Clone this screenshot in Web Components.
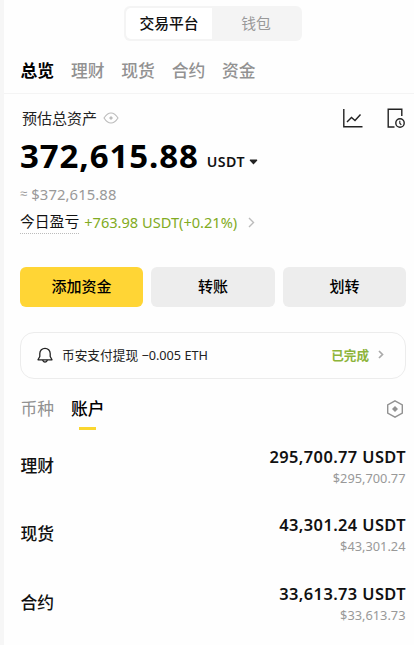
<!DOCTYPE html>
<html lang="zh-CN">
<head>
<meta charset="UTF-8">
<meta name="viewport" content="width=device-width, initial-scale=1">
<title>总览</title>
<style>
body{
    margin: 0;
    background: #fefefe;
    font-family: "Noto Sans", "Noto Sans CJK SC", sans-serif;
    color: #111;
}
</style>
</head>
<body>
<wallet-page>
    <mode-switch></mode-switch>
    <nav-tabs></nav-tabs>
    <asset-summary></asset-summary>
    <action-bar>
        <action-button class="primary">添加资金</action-button>
        <action-button>转账</action-button>
        <action-button>划转</action-button>
    </action-bar>
    <notice-card><span>币安支付提现 −0.005 ETH</span><span slot="status">已完成</span></notice-card>
    <account-tabs></account-tabs>
    <account-row name="理财" amount="295,700.77 USDT" fiat="$295,700.77"></account-row>
    <account-row name="现货" amount="43,301.24 USDT" fiat="$43,301.24"></account-row>
    <account-row name="合约" amount="33,613.73 USDT" fiat="$33,613.73"></account-row>
</wallet-page>

<script>
const base = `
<style>
*, :host{
    box-sizing: border-box;
}
:host{
    display: block;
    white-space: nowrap;
}
svg{
    display: block;
    flex: none;
    fill: none;
    stroke: currentColor;
}
</style>
`;

function define(name, render) {
    window.customElements.define(name, class extends HTMLElement {
        constructor() {
            super();
            this.shadowDom = this.attachShadow({ mode: 'open' });
            this.shadowDom.innerHTML = base + render(this);
        }
    });
}

define('wallet-page', () => `
<style>
:host{
    display: flex;
    flex-direction: column;
    height: 645px;
    overflow: hidden;
    border-left: 4px solid #f6f6f6;
}
::slotted(*){
    flex: none;
}
</style>
<slot></slot>
`);

define('mode-switch', () => `
<style>
:host{
    display: flex;
    width: 178px;
    height: 35px;
    margin: 6px 0 0 120px;
    padding: 2px;
    border-radius: 6px;
    background: #f4f4f4;
    font-size: 14.8px;
    line-height: 30px;
    text-align: center;
}
.item{
    flex: 1;
    color: #999;
}
.active{
    flex: none;
    width: 86px;
    border-radius: 5px 0 0 5px;
    background: #fff;
    color: #111;
    font-weight: 500;
}
</style>
<div class="item active">交易平台</div>
<div class="item">钱包</div>
`);

define('nav-tabs', () => `
<style>
:host{
    display: flex;
    gap: 16.8px;
    height: 53px;
    padding: 14px 0 0 16.5px;
    border-bottom: 1px solid #f4f4f4;
    font-size: 16.8px;
    line-height: 32px;
    color: #929292;
    font-weight: 500;
}
.active{
    color: #000;
    font-weight: 700;
}
</style>
<span class="active">总览</span>
<span>理财</span>
<span>现货</span>
<span>合约</span>
<span>资金</span>
`);

define('asset-summary', () => `
<style>
:host{
    height: 173px;
    padding: 11px 8px 0 16px;
}
div{
    display: flex;
    align-items: center;
}
.title{
    height: 25px;
    padding-left: 2px;
    font-size: 15px;
    color: #222;
}
.eye{
    margin-left: 6px;
    color: #bcbcbc;
}
.chart{
    margin-left: auto;
}
.doc{
    margin-left: 24px;
}
.total{
    height: 52px;
    line-height: 52px;
}
.total b{
    font-size: 33px;
    letter-spacing: .9px;
    color: #000;
}
.unit{
    margin: 11px 0 0 8px;
    font-size: 14.2px;
    letter-spacing: .5px;
    font-weight: 600;
}
.caret{
    margin: 12px 0 0 4px;
}
.fiat{
    height: 23px;
    font-size: 14.8px;
    letter-spacing: .1px;
    color: #999;
}
.approx{
    margin-right: 4px;
    font-family: "Liberation Sans", sans-serif;
    font-size: 13px;
}
.pnl{
    height: 33px;
    font-size: 14.8px;
    line-height: 23px;
}
.label{
    border-bottom: 1px dotted #bbb;
}
.gain{
    margin: 1px 0 0 5px;
    font-size: 14.6px;
    color: #81ab22;
}
.arrow{
    margin: 1px 0 0 11px;
    color: #bbb;
}
</style>
<div class="title">
    预估总资产
    <svg class="eye" width="16" height="12" viewBox="0 0 16 12" stroke-width="1.1"><path d="M1 6Q4.2 1 8 1T15 6Q11.8 11 8 11T1 6Z"/><path d="M8 4l2 2-2 2-2-2z" fill="currentColor" stroke="none"/></svg>
    <svg class="chart" width="20" height="20" viewBox="0 0 20 20" stroke-width="1.4"><path d="M.8 1V18.8H19.5M4 14L8.5 9.5L12 12.5L17.5 6.5"/></svg>
    <svg class="doc" width="19" height="20" viewBox="0 0 19 20" stroke-width="1.4"><path d="M7.5 19H1.2V1.3H14.8V8"/><circle cx="13" cy="15" r="4.2"/><path d="M12.8 12.8V15.2L14.3 16.8" stroke-width="1.1"/></svg>
</div>
<div class="total">
    <b>372,615.88</b>
    <span class="unit">USDT</span>
    <svg class="caret" width="9" height="6" viewBox="0 0 9 6"><path d="M1 .5H8L8.3 1.5L4.5 5.5L.7 1.5Z" fill="#222" stroke="none"/></svg>
</div>
<div class="fiat"><span class="approx">≈</span>$372,615.88</div>
<div class="pnl">
    <span class="label">今日盈亏</span>
    <span class="gain">+763.98 USDT(+0.21%)</span>
    <svg class="arrow" width="7" height="11" viewBox="0 0 7 11" stroke-width="1.4"><path d="M1 1L5.5 5.5L1 10"/></svg>
</div>
`);

define('action-bar', () => `
<style>
:host{
    display: grid;
    grid-template-columns: repeat(3, 1fr);
    gap: 8.3px;
    padding: 0 8px 0 16px;
}
</style>
<slot></slot>
`);

define('action-button', () => `
<style>
:host{
    height: 39.5px;
    border-radius: 6px;
    background: #ededed;
    text-align: center;
    font-size: 15px;
    line-height: 38px;
    font-weight: 500;
    color: #000;
}
:host(.primary){
    background: #ffd535;
}
</style>
<slot></slot>
`);

define('notice-card', () => `
<style>
:host{
    display: flex;
    align-items: center;
    height: 47px;
    margin: 25px 8px 0 16px;
    padding: 0 21px 1px 16px;
    border: 1px solid #ececec;
    border-radius: 14px;
    font-size: 12.7px;
    color: #222;
}
.text{
    margin: 0 auto 0 9px;
}
.status{
    color: #8db43a;
    font-size: 12.6px;
    font-weight: 700;
}
.arrow{
    margin-left: 9px;
    color: #aaa;
}
</style>
<svg width="16" height="16" viewBox="0 0 16 16" stroke-width="1.3"><path d="M1 12.8H15L13.2 9.5V6.5A5.2 5.2 0 0 0 2.8 6.5V9.5Z" stroke-linejoin="round"/><path d="M5.5 13.2Q8 17 10.5 13.2"/></svg>
<span class="text"><slot></slot></span>
<span class="status"><slot name="status"></slot></span>
<svg class="arrow" width="6" height="9" viewBox="0 0 6 9" stroke-width="1.7"><path d="M1 1L4.5 4.5L1 8"/></svg>
`);

define('account-tabs', () => `
<style>
:host{
    display: flex;
    align-items: flex-start;
    gap: 16.8px;
    height: 51px;
    padding: 14px 10px 0 16.5px;
    font-size: 16.8px;
    line-height: 32px;
    color: #929292;
}
.active{
    color: #000;
    font-weight: 500;
}
.active::after{
    content: "";
    display: block;
    width: 17px;
    height: 3px;
    margin: 2px auto 0;
    background: #fad62f;
}
svg{
    margin: 7px 0 0 auto;
}
</style>
<span>币种</span>
<span class="active">账户</span>
<svg width="18" height="18" viewBox="0 0 18 18" stroke-width="1.4"><path d="M9 .9L16.3 4.9V13.1L9 17.1L1.7 13.1V4.9Z"/><path d="M9 6L12 9L9 12L6 9Z" fill="currentColor" stroke="none"/></svg>
`);

define('account-row', host => `
<style>
:host{
    display: flex;
    justify-content: space-between;
    height: 68.5px;
    padding: 0 8.5px 0 16.5px;
}
.name{
    padding-top: 21px;
    font-size: 16.8px;
    line-height: 30px;
    font-weight: 500;
}
.values{
    padding-top: 16px;
    text-align: right;
}
.amount{
    margin-right: -.5px;
    font-size: 16.4px;
    line-height: 22px;
    letter-spacing: .4px;
    font-weight: 600;
}
.fiat{
    font-size: 12.8px;
    line-height: 21px;
    color: #999;
}
</style>
<div class="name">${host.getAttribute('name')}</div>
<div class="values">
    <div class="amount">${host.getAttribute('amount')}</div>
    <div class="fiat">${host.getAttribute('fiat')}</div>
</div>
`);
</script>
</body>
</html>
